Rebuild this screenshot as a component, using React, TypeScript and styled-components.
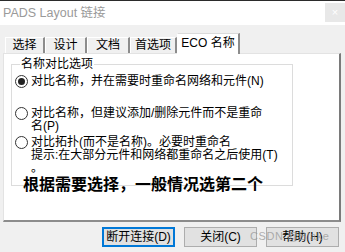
import React from "react";
import styled, { createGlobalStyle } from "styled-components";

const GlobalStyle = createGlobalStyle`
  html, body {
    margin: 0;
    padding: 0;
    background: #f0f0f0;
  }
  body {
    font-family: "Liberation Sans", "Noto Sans CJK SC", sans-serif;
    font-size: 12px;
    color: #000;
  }
`;

const tabs = [
  { label: "选择", width: 40 },
  { label: "设计", width: 42 },
  { label: "文档", width: 43 },
  { label: "首选项", width: 47 },
  { label: "ECO 名称", width: 63 },
];

const options = [
  { lines: ["对比名称，并在需要时重命名网络和元件(N)"], checked: true, space: 4 },
  { lines: ["对比名称，但建议添加/删除元件而不是重命", "名(P)"], checked: false, space: 19 },
  {
    lines: ["对比拓扑(而不是名称)。必要时重命名", "提示:在大部分元件和网络都重命名之后使用(T)", "。"],
    checked: false,
    space: 3,
  },
];

const App = () => {
  return (
    <Window>
      <GlobalStyle />
      <TitleBar>
        <Title>PADS Layout 链接</Title>
        <CloseBox>×</CloseBox>
      </TitleBar>
      <TabRow>
        {tabs.map((t, i) => (
          <Tab key={t.label} $width={t.width} $active={i === tabs.length - 1}>
            {t.label}
          </Tab>
        ))}
      </TabRow>
      <Panel>
        <Group>
          <Legend>名称对比选项</Legend>
          {options.map((o, i) => (
            <OptionRow key={i} $space={o.space}>
              <Radio $checked={o.checked} />
              <OptionText>
                {o.lines.map((l, j) => (
                  <Line key={j}>{l}</Line>
                ))}
              </OptionText>
            </OptionRow>
          ))}
        </Group>
        <Note>根据需要选择，一般情况选第二个</Note>
      </Panel>
      <ButtonRow>
        <DialogButton $focused>断开连接(D)</DialogButton>
        <DialogButton>关闭(C)</DialogButton>
        <DialogButton>帮助(H)</DialogButton>
      </ButtonRow>
      <Watermark>CSDN @Blake</Watermark>
    </Window>
  );
};

const Window = styled.div`
  position: relative;
  width: 345px;
  height: 252px;
  overflow: hidden;
  display: flex;
  flex-direction: column;
  background: #f0f0f0;
`;

const TitleBar = styled.div`
  height: 24px;
  border-top: 1px solid #2b2b2b;
  background: #fff;
  display: flex;
  justify-content: space-between;
  align-items: flex-start;
  padding-left: 3px;
`;

const Title = styled.span`
  margin-top: 5px;
  color: #9a9a9a;
  font-size: 12.5px;
  line-height: 14px;
`;

const CloseBox = styled.div`
  margin-top: 2px;
  width: 20px;
  height: 19px;
  background: #e8e8e8;
  color: #fff;
  font-size: 11px;
  line-height: 19px;
  text-align: center;
`;

const TabRow = styled.div`
  margin-top: 8px;
  height: 20px;
  padding-left: 5px;
  display: flex;
  align-items: flex-end;
`;

const Tab = styled.div<{ $active?: boolean; $width: number }>`
  position: relative;
  z-index: ${(p) => (p.$active ? 2 : 1)};
  box-sizing: border-box;
  width: ${(p) => p.$width}px;
  height: ${(p) => (p.$active ? "21px" : "16px")};
  margin-bottom: ${(p) => (p.$active ? "-1px" : "0")};
  padding-top: ${(p) => (p.$active ? "2px" : "0")};
  background: ${(p) => (p.$active ? "#fff" : "#f0f0f0")};
  border-top: 1px solid ${(p) => (p.$active ? "#dadada" : "#fff")};
  border-left: 1px solid #fff;
  border-right: 2px solid #8c8c8c;
  line-height: 15px;
  text-align: center;
  white-space: nowrap;
`;

const Panel = styled.div`
  position: relative;
  box-sizing: border-box;
  margin-left: 3px;
  width: 338px;
  height: 169px;
  padding: 4px 0 0 7px;
  background: #fff;
  border-top: 1px solid #e3e3e3;
  border-left: 1px solid #e3e3e3;
  border-right: 2px solid #7a7a7a;
  border-bottom: 2px solid #8c8c8c;
`;

const Group = styled.fieldset`
  box-sizing: border-box;
  margin: 0;
  padding: 0 0 0 3px;
  width: 282px;
  height: 128px;
  border: 1px solid #dcdcdc;
`;

const Legend = styled.legend`
  margin-left: 5px;
  padding: 0 1px;
  line-height: 13px;
`;

const OptionRow = styled.div<{ $space: number }>`
  display: flex;
  align-items: flex-start;
  gap: 3px;
  margin-top: ${(p) => p.$space}px;
`;

const Radio = styled.span<{ $checked?: boolean }>`
  position: relative;
  flex: none;
  box-sizing: border-box;
  width: 13px;
  height: 13px;
  border-radius: 50%;
  border: 1px solid #333;
  background: #fff;

  &::after {
    content: "";
    display: ${(p) => (p.$checked ? "block" : "none")};
    position: absolute;
    left: 2px;
    top: 2px;
    width: 7px;
    height: 7px;
    border-radius: 50%;
    background: #222;
  }
`;

const OptionText = styled.div`
  display: flex;
  flex-direction: column;
`;

const Line = styled.span`
  line-height: 13px;
  white-space: nowrap;
`;

const Note = styled.div`
  position: absolute;
  left: 19px;
  top: 122px;
  font-size: 16px;
  font-weight: bold;
  line-height: 18px;
  white-space: nowrap;
`;

const ButtonRow = styled.div`
  margin-top: 5px;
  padding-right: 6px;
  display: flex;
  justify-content: flex-end;
  gap: 9px;
`;

const DialogButton = styled.button<{ $focused?: boolean }>`
  box-sizing: border-box;
  width: 73px;
  height: 20px;
  padding: 0;
  background: #e1e1e1;
  border: ${(p) => (p.$focused ? "2px solid #0078d7" : "1px solid #adadad")};
  font-family: "Liberation Sans", "Noto Sans CJK SC", sans-serif;
  font-size: 12px;
  line-height: 16px;
  color: #000;
`;

const Watermark = styled.div`
  position: absolute;
  left: 250px;
  top: 230px;
  font-size: 11px;
  line-height: 13px;
  color: rgba(150, 150, 150, 0.75);
  white-space: nowrap;
  letter-spacing: 0.6px;
`;

export default App;
